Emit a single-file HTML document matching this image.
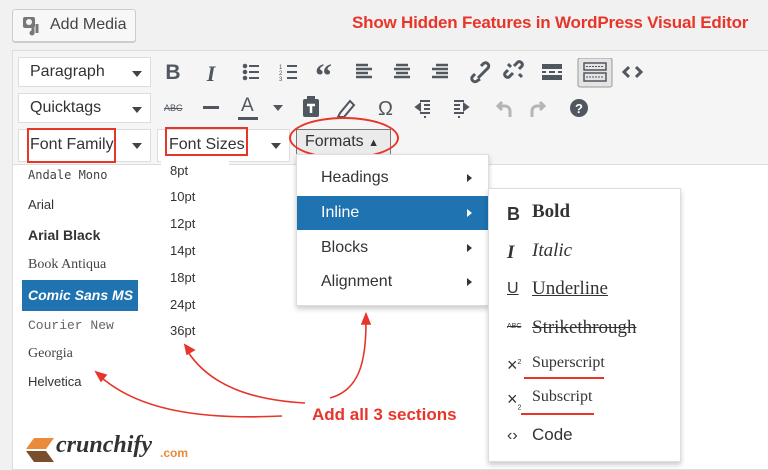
<!DOCTYPE html>
<html><head><meta charset="utf-8"><style>
*{margin:0;padding:0;box-sizing:border-box}
body{width:768px;height:469px;overflow:hidden;background:#f1f1f1;font-family:"Liberation Sans",sans-serif;position:relative;color:#333}
.a{position:absolute}
.btn{left:12px;top:9px;width:124px;height:33px;border:1px solid #ccc;border-radius:3px;background:#f7f7f7;box-shadow:0 1px 0 #ccc;font-size:16px;color:#444;padding:6px 0 0 37px}
.title{left:352px;top:13px;font-size:17px;font-weight:bold;color:#e8352a;letter-spacing:-0.2px}
.editor{left:12px;top:50px;width:760px;height:420px;border:1px solid #ddd;background:#fff}
.tb{left:13px;top:51px;width:755px;height:114px;background:#f5f5f5;border-bottom:1px solid #ddd}
.sel{background:#fff;border:1px solid #ddd;font-size:16px;color:#333;padding:5px 0 0 11px;height:30px}
.sel::after{content:"";position:absolute;right:8px;top:13px;border:5px solid transparent;border-top:6px solid #444}
.ic{font-size:20px;color:#50575e;text-align:center;width:30px;font-weight:bold}
.menu{background:#fff;border:1px solid #ddd;box-shadow:0 3px 5px rgba(0,0,0,.2)}
.mi{font-size:16px;color:#333;position:absolute;left:24px}
.arr{position:absolute;right:12px;width:0;height:0;border:4px solid transparent;border-left:5px solid #333}
.fs{left:170px;font-size:13px;color:#333}
.ff{left:28px;font-size:13px;color:#333}
.sub{font-family:"Liberation Serif",serif;font-size:19px;color:#333;left:43px;position:absolute}
.sic{position:absolute;left:18px;font-size:16px;color:#333;width:20px}
</style></head><body>
<div class="a btn">Add Media</div>
<svg class="a" style="left:22px;top:16px" width="20" height="20"><rect x="1" y="1" width="12" height="11" rx="2" fill="#777"/><circle cx="7" cy="6" r="3" fill="#f7f7f7"/><path d="M11 12v6M15 8v9" stroke="#777" stroke-width="3"/><circle cx="10" cy="17" r="2.5" fill="#777"/></svg>
<div class="a title">Show Hidden Features in WordPress Visual Editor</div>
<div class="a editor"></div>
<div class="a tb"></div>
<div class="a sel" style="left:18px;top:57px;width:133px">Paragraph</div>
<div class="a sel" style="left:18px;top:93px;width:133px">Quicktags</div>
<div class="a sel" style="left:18px;top:129px;width:133px;height:33px;padding-top:6px">Font Family</div>
<div class="a sel" style="left:157px;top:129px;width:133px;height:33px;padding-top:6px">Font Sizes</div>
<div class="a" style="left:296px;top:129px;width:95px;height:25px;border:1px solid #777;border-bottom:none;background:#ebebeb;font-size:16px;padding:3px 0 0 8px">Formats <span style="font-size:11px">▲</span></div>
<div class="a ic" style="left:158px;top:61px;font-size:21px">B</div>
<div class="a ic" style="left:196px;top:61px;font-family:'Liberation Serif',serif;font-style:italic;font-size:22px">I</div>
<svg class="a" style="left:240px;top:60px" width="240" height="26" fill="none" stroke="#50575e" stroke-width="2">
<g><circle cx="5" cy="6" r="1.3" fill="#50575e"/><circle cx="5" cy="12" r="1.3" fill="#50575e"/><circle cx="5" cy="18" r="1.3" fill="#50575e"/><path d="M9 6h10M9 12h10M9 18h10"/></g>
<g transform="translate(38,0)" ><path d="M9 6h10M9 12h10M9 18h10"/><text x="1" y="9" font-size="6" fill="#50575e" stroke="none">1</text><text x="1" y="15" font-size="6" fill="#50575e" stroke="none">2</text><text x="1" y="21" font-size="6" fill="#50575e" stroke="none">3</text></g>
<text x="75" y="27" font-size="34" font-weight="bold" fill="#50575e" stroke="none" font-family="Liberation Serif">“</text>
<g transform="translate(114,0)" stroke-width="2.4"><path d="M2 5h12M2 9h16M2 13h12M2 17h16"/></g>
<g transform="translate(152,0)" stroke-width="2.4"><path d="M4 5h12M2 9h16M4 13h12M2 17h16"/></g>
<g transform="translate(190,0)" stroke-width="2.4"><path d="M6 5h12M2 9h16M6 13h12M2 17h16"/></g>
</svg>
<svg class="a" style="left:468px;top:58px" width="180" height="30" fill="none" stroke="#50575e" stroke-width="3">
<path d="M9 18l8-8M6 14l-2 2a3 3 0 004 5l3-2M16 11l3-3a3 3 0 00-5-4l-2 2" transform="translate(1,2)"/>
<path d="M45 15l-4 4a3 3 0 01-4-4l3-3M51 11l3-3a3 3 0 00-4-4l-4 4M40 6l3 3M54 19l-3-3" />
<rect x="74" y="6" width="20" height="5" fill="#50575e" stroke="none"/><rect x="74" y="17" width="20" height="5" fill="#50575e" stroke="none"/><path d="M74 14h4M81 14h6M90 14h4" stroke-width="2"/>
<rect x="110" y="0" width="34" height="29" rx="2" fill="#e4e4e4" stroke="#999" stroke-width="1"/>
<rect x="116" y="5" width="22" height="7" stroke-width="1.5"/><rect x="116" y="15" width="22" height="8" stroke-width="1.5"/>
<path d="M118 8.5h18M118 19h18" stroke-width="1" stroke-dasharray="2 1"/>
<path d="M161 9l-5 5 5 5M168 9l5 5-5 5"/>
</svg>
<div class="a" style="left:164px;top:103px;font-size:9px;color:#50575e;text-decoration:line-through">ABC</div>
<div class="a" style="left:203px;top:106px;width:16px;height:3px;background:#50575e"></div>
<div class="a" style="left:241px;top:95px;font-size:19px;color:#50575e">A</div>
<div class="a" style="left:238px;top:117px;width:20px;height:3px;background:#50575e"></div>
<div class="a" style="left:273px;top:105px;border:5px solid transparent;border-top:6px solid #50575e"></div>
<svg class="a" style="left:298px;top:95px" width="300" height="26">
<rect x="5" y="4" width="16" height="18" rx="2" fill="#50575e"/><rect x="9" y="1" width="8" height="5" fill="#50575e"/><path d="M9 10h8M13 10v8" stroke="#fff" stroke-width="2.5"/>
<path d="M42 18l10-12 4 4-10 12h-6z" fill="none" stroke="#50575e" stroke-width="2"/>
<text x="80" y="20" font-size="20" fill="#50575e" font-family="Liberation Sans">Ω</text>
<g stroke="#50575e" stroke-width="2"><path d="M122 6h10M126 10h6M126 14h6M122 18h10M126 22h2"/><path d="M118 12l4-3v6z" fill="#50575e"/></g>
<g stroke="#50575e" stroke-width="2"><path d="M156 6h10M156 10h6M156 14h6M156 18h10M160 22h2"/><path d="M170 12l-4-3v6z" fill="#50575e"/></g>
<path d="M212 22v-6a5 5 0 00-5-5h-7M204 7l-4 4 4 4" fill="none" stroke="#b5b5b5" stroke-width="3"/>
<path d="M234 22v-6a5 5 0 015-5h7M242 7l4 4-4 4" fill="none" stroke="#b5b5b5" stroke-width="3"/>
<circle cx="281" cy="13" r="9" fill="#50575e"/><text x="277" y="18" font-size="13" font-weight="bold" fill="#fff">?</text>
</svg>
<div class="a" style="left:13px;top:165px;width:147px;height:240px;background:#fff"></div>
<div class="a ff" style="top:168px;font-family:'DejaVu Sans Mono',monospace;font-size:12px;color:#444">Andale Mono</div>
<div class="a ff" style="top:197px">Arial</div>
<div class="a ff" style="top:227px;font-weight:bold;font-size:14px">Arial Black</div>
<div class="a ff" style="top:257px;font-family:'Liberation Serif',serif;font-size:14px;color:#444">Book Antiqua</div>
<div class="a" style="left:22px;top:280px;width:116px;height:31px;background:#1e73b0"></div>
<div class="a" style="left:28px;top:287px;color:#fff;font-size:14px;font-style:italic;font-weight:bold">Comic Sans MS</div>
<div class="a ff" style="top:318px;font-family:'Liberation Mono',monospace;color:#666">Courier New</div>
<div class="a ff" style="top:346px;font-family:'Liberation Serif',serif;font-size:14px;color:#444">Georgia</div>
<div class="a ff" style="top:374px">Helvetica</div>
<div class="a" style="left:161px;top:160px;width:68px;height:190px;background:#fff"></div>
<div class="a fs" style="top:163px">8pt</div>
<div class="a fs" style="top:189px">10pt</div>
<div class="a fs" style="top:216px">12pt</div>
<div class="a fs" style="top:243px">14pt</div>
<div class="a fs" style="top:270px">18pt</div>
<div class="a fs" style="top:297px">24pt</div>
<div class="a fs" style="top:323px">36pt</div>
<div class="a" style="left:27px;top:128px;width:89px;height:35px;border:2px solid #e8352a"></div>
<div class="a" style="left:165px;top:127px;width:83px;height:29px;border:2px solid #e8352a"></div>
<div class="a" style="left:289px;top:117px;width:110px;height:42px;border:2px solid #e8352a;border-radius:50%"></div>
<div class="a menu" style="left:296px;top:154px;width:193px;height:152px">
<div class="mi" style="top:14px">Headings</div><div class="arr" style="top:19px"></div>
<div class="a" style="left:0;top:41px;width:192px;height:34px;background:#1e73b0"></div>
<div class="mi" style="top:49px;color:#fff">Inline</div><div class="arr" style="top:54px;border-left-color:#fff"></div>
<div class="mi" style="top:84px">Blocks</div><div class="arr" style="top:89px"></div>
<div class="mi" style="top:118px">Alignment</div><div class="arr" style="top:123px"></div>
</div>
<div class="a menu" style="left:488px;top:188px;width:193px;height:274px">
<div class="sic" style="top:15px;font-weight:bold;font-size:18px">B</div><div class="sub" style="top:12px;font-weight:bold">Bold</div>
<div class="sic" style="top:53px;font-style:italic;font-family:'Liberation Serif',serif;font-weight:bold;font-size:19px">I</div><div class="sub" style="top:51px;font-style:italic">Italic</div>
<div class="sic" style="top:91px;text-decoration:underline;font-size:16px">U</div><div class="sub" style="top:89px;text-decoration:underline">Underline</div>
<div class="sic" style="top:134px;font-size:7px;text-decoration:line-through">ABC</div><div class="sub" style="top:128px;text-decoration:line-through">Strikethrough</div>
<div class="sic" style="top:166px;font-size:18px">×<sup style="font-size:7px">2</sup></div><div class="sub" style="top:165px;font-size:16px">Superscript</div>
<div class="sic" style="top:200px;font-size:18px">×<sub style="font-size:7px">2</sub></div><div class="sub" style="top:199px;font-size:16px">Subscript</div>
<div class="sic" style="top:238px;font-size:16px">‹›</div><div class="sub" style="top:236px;font-family:'Liberation Sans',sans-serif;font-size:17px">Code</div>
</div>
<div class="a" style="left:524px;top:377px;width:80px;height:2px;background:#e8352a"></div>
<div class="a" style="left:521px;top:413px;width:73px;height:2px;background:#e8352a"></div>
<svg class="a" style="left:0;top:0" width="768" height="469" fill="none" stroke="#e8352a" stroke-width="1.6">
<path d="M282 416C200 420 140 410 102 378"/><path d="M96 372l10 3-5 6z" fill="#e8352a"/>
<path d="M305 403C250 400 210 385 188 352"/><path d="M185 345l9 5-7 4z" fill="#e8352a"/>
<path d="M330 398C360 390 366 360 366 322"/><path d="M366 314l4 10h-8z" fill="#e8352a"/>
</svg>
<div class="a" style="left:312px;top:405px;font-size:17px;color:#e8352a;font-weight:bold">Add all 3 sections</div>
<svg class="a" style="left:24px;top:436px" width="30" height="28"><path d="M10 2h20l-8 11H2z" fill="#e98b3a"/><path d="M2 15h20l8 11H10z" fill="#7a4e2d"/></svg>
<div class="a" style="left:56px;top:432px;font-size:24px;font-weight:bold;font-style:italic;color:#333;font-family:'Liberation Serif',serif">crunchify</div>
<div class="a" style="left:160px;top:446px;font-size:12px;color:#e98b3a;font-weight:bold">.com</div>
</body></html>
